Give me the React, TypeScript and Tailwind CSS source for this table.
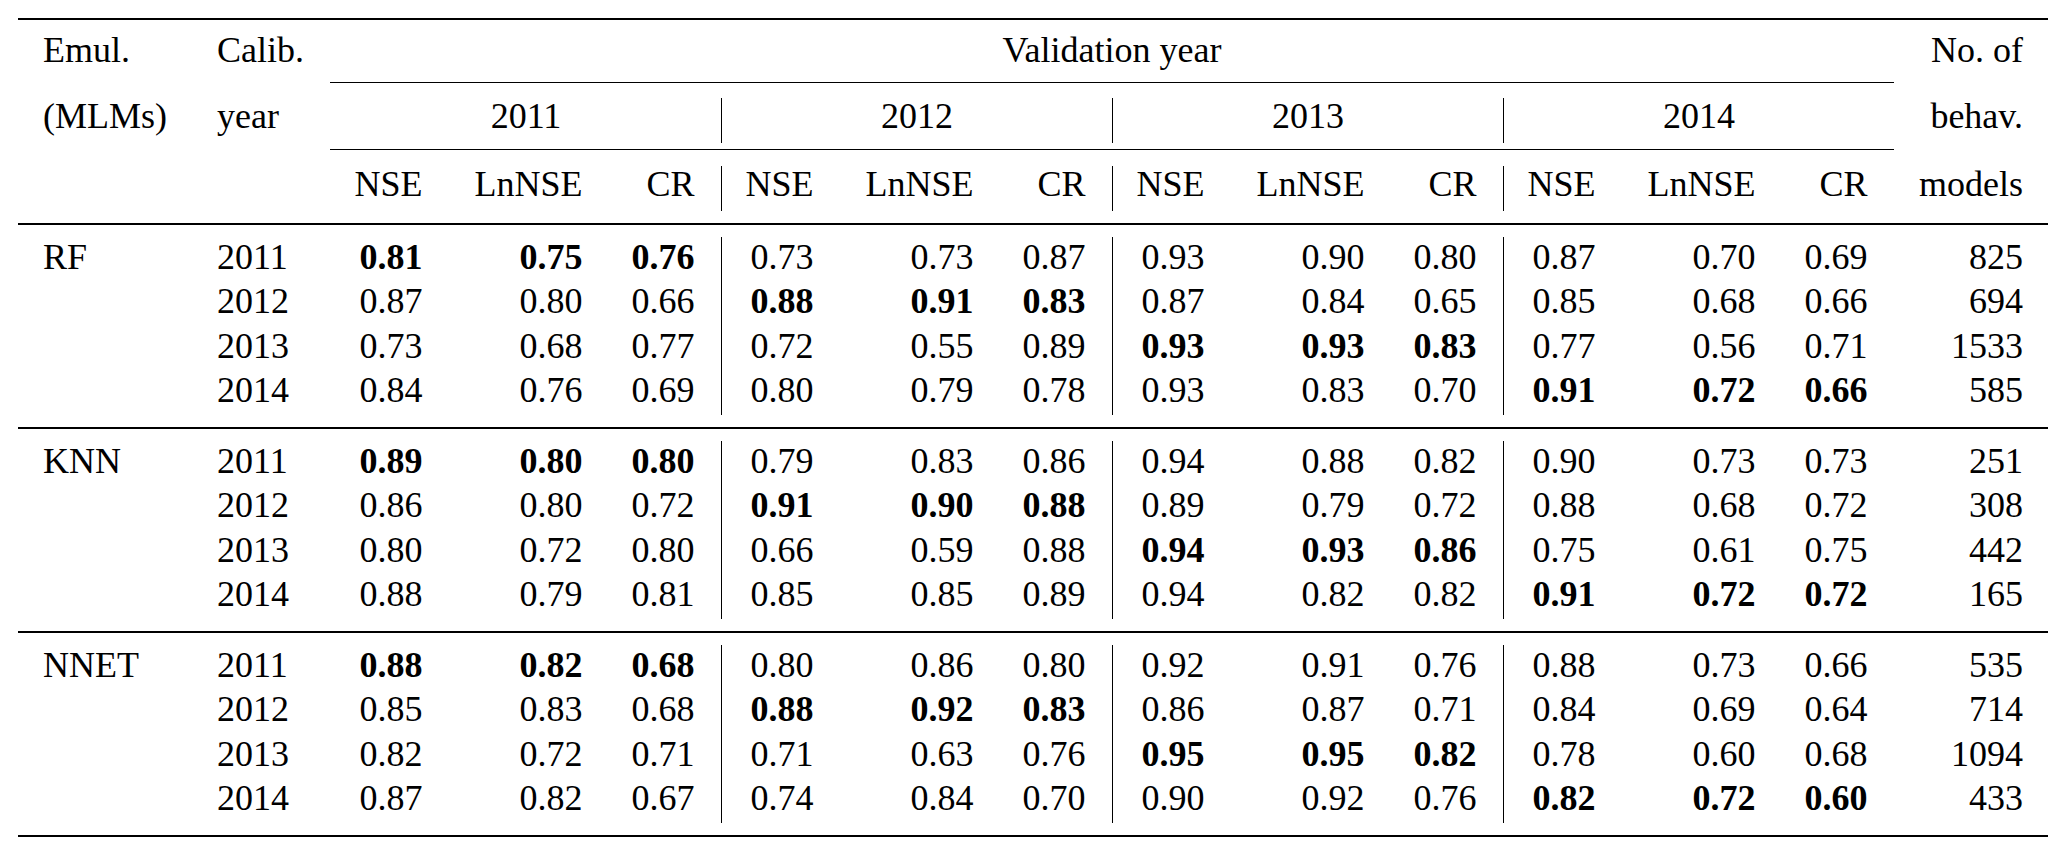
import React from "react";

type Block = { name: string; rows: { year: string; vals: string[]; n: string }[] };

const data: Block[] = [
  {
    name: "RF",
    rows: [
      { year: "2011", vals: ["0.81", "0.75", "0.76", "0.73", "0.73", "0.87", "0.93", "0.90", "0.80", "0.87", "0.70", "0.69"], n: "825" },
      { year: "2012", vals: ["0.87", "0.80", "0.66", "0.88", "0.91", "0.83", "0.87", "0.84", "0.65", "0.85", "0.68", "0.66"], n: "694" },
      { year: "2013", vals: ["0.73", "0.68", "0.77", "0.72", "0.55", "0.89", "0.93", "0.93", "0.83", "0.77", "0.56", "0.71"], n: "1533" },
      { year: "2014", vals: ["0.84", "0.76", "0.69", "0.80", "0.79", "0.78", "0.93", "0.83", "0.70", "0.91", "0.72", "0.66"], n: "585" },
    ],
  },
  {
    name: "KNN",
    rows: [
      { year: "2011", vals: ["0.89", "0.80", "0.80", "0.79", "0.83", "0.86", "0.94", "0.88", "0.82", "0.90", "0.73", "0.73"], n: "251" },
      { year: "2012", vals: ["0.86", "0.80", "0.72", "0.91", "0.90", "0.88", "0.89", "0.79", "0.72", "0.88", "0.68", "0.72"], n: "308" },
      { year: "2013", vals: ["0.80", "0.72", "0.80", "0.66", "0.59", "0.88", "0.94", "0.93", "0.86", "0.75", "0.61", "0.75"], n: "442" },
      { year: "2014", vals: ["0.88", "0.79", "0.81", "0.85", "0.85", "0.89", "0.94", "0.82", "0.82", "0.91", "0.72", "0.72"], n: "165" },
    ],
  },
  {
    name: "NNET",
    rows: [
      { year: "2011", vals: ["0.88", "0.82", "0.68", "0.80", "0.86", "0.80", "0.92", "0.91", "0.76", "0.88", "0.73", "0.66"], n: "535" },
      { year: "2012", vals: ["0.85", "0.83", "0.68", "0.88", "0.92", "0.83", "0.86", "0.87", "0.71", "0.84", "0.69", "0.64"], n: "714" },
      { year: "2013", vals: ["0.82", "0.72", "0.71", "0.71", "0.63", "0.76", "0.95", "0.95", "0.82", "0.78", "0.60", "0.68"], n: "1094" },
      { year: "2014", vals: ["0.87", "0.82", "0.67", "0.74", "0.84", "0.70", "0.90", "0.92", "0.76", "0.82", "0.72", "0.60"], n: "433" },
    ],
  },
];

const years = ["2011", "2012", "2013", "2014"];

function GroupCells({ vals, bold }: { vals: string[]; bold: boolean }) {
  const w = bold ? "font-bold" : "font-normal";
  return (
    <>
      <div className={`w-[91.5px] text-right ${w}`}>{vals[0]}</div>
      <div className={`w-[160px] text-right ${w}`}>{vals[1]}</div>
      <div className={`w-[112px] text-right ${w}`}>{vals[2]}</div>
      <div className="w-[26px]" />
    </>
  );
}

export default function App() {
  return (
    <div
      className="min-h-[855px] w-[2067px] bg-white text-black pt-[18px] pl-[18px]"
      style={{ fontFamily: '"Liberation Serif", "Times New Roman", serif' }}
    >
      <div className="w-[2030px] text-[36px]">
        {/* top rule */}
        <div className="h-[2px] bg-black" />

        {/* header row 1 */}
        <div className="flex h-[62.5px] leading-[36px]">
          <div className="w-[187px] pl-[25px] pt-[12px]">Emul.</div>
          <div className="w-[125px] pl-[12px] pt-[12px]">Calib.</div>
          <div className="w-[1564px] pt-[12px] text-center border-b-[1.5px] border-black">Validation year</div>
          <div className="w-[154px] pr-[25px] pt-[12px] text-right">No. of</div>
        </div>

        {/* header row 2 */}
        <div className="flex h-[67.5px] leading-[36px]">
          <div className="w-[187px] pl-[25px] pt-[15.5px]">(MLMs)</div>
          <div className="w-[125px] pl-[12px] pt-[15.5px]">year</div>
          {years.map((y, i) => (
            <div key={y} className="w-[391px] pt-[15.5px] border-b-[1.5px] border-black">
              <div
                className={`h-[45px] text-center border-l-[1.5px] ${i === 0 ? "border-transparent" : "border-black"}`}
              >
                {y}
              </div>
            </div>
          ))}
          <div className="w-[154px] pr-[25px] pt-[15.5px] text-right">behav.</div>
        </div>

        {/* header row 3 */}
        <div className="flex h-[72.5px] leading-[36px]">
          <div className="w-[187px]" />
          <div className="w-[125px]" />
          {years.map((y, i) => (
            <div key={y} className="w-[391px] pt-[16px]">
              <div
                className={`flex h-[45px] border-l-[1.5px] ${i === 0 ? "border-transparent" : "border-black"}`}
              >
                <GroupCells vals={["NSE", "LnNSE", "CR"]} bold={false} />
              </div>
            </div>
          ))}
          <div className="w-[154px] pr-[25px] pt-[16px] text-right">models</div>
        </div>

        {/* mid rule */}
        <div className="h-[2px] bg-black" />

        {data.map((block) => (
          <div key={block.name}>
            <div className="pt-[12px] pb-[12px]">
              {block.rows.map((r, ri) => (
                <div key={r.year} className="flex h-[44.5px] leading-[40px]">
                  <div className="w-[187px] pl-[25px]">{ri === 0 ? block.name : ""}</div>
                  <div className="w-[125px] pl-[12px]">{r.year}</div>
                  {years.map((y, gi) => (
                    <div
                      key={y}
                      className={`flex w-[391px] border-l-[1.5px] ${gi === 0 ? "border-transparent" : "border-black"}`}
                    >
                      <GroupCells vals={r.vals.slice(gi * 3, gi * 3 + 3)} bold={gi === ri} />
                    </div>
                  ))}
                  <div className="w-[154px] pr-[25px] text-right">{r.n}</div>
                </div>
              ))}
            </div>
            <div className="h-[2px] bg-black" />
          </div>
        ))}
      </div>
    </div>
  );
}
